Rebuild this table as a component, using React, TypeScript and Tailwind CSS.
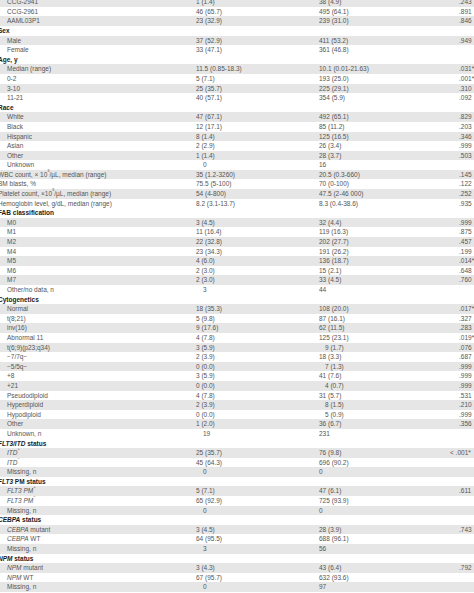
import React from 'react';

type Row = {
  l: React.ReactNode;
  t: 'h' | 's' | 'r';
  a?: string;
  b?: string;
  p?: string;
  g?: boolean;
};

const Sup = ({ c }: { c: string }) => <sup className="text-[4px] align-super leading-none">{c}</sup>;

const rows: Row[] = [
  { l: 'CCG-2941', t: 's', a: '1 (1.4)', b: '38 (4.9)', p: '.243', g: true },
  { l: 'CCG-2961', t: 's', a: '46 (65.7)', b: '495 (64.1)', p: '.891' },
  { l: 'AAML03P1', t: 's', a: '23 (32.9)', b: '239 (31.0)', p: '.846', g: true },
  { l: 'Sex', t: 'h' },
  { l: 'Male', t: 's', a: '37 (52.9)', b: '411 (53.2)', p: '.949', g: true },
  { l: 'Female', t: 's', a: '33 (47.1)', b: '361 (46.8)' },
  { l: 'Age, y', t: 'h' },
  { l: 'Median (range)', t: 's', a: '11.5 (0.85-18.3)', b: '10.1 (0.01-21.63)', p: '.031*', g: true },
  { l: '0-2', t: 's', a: '5 (7.1)', b: '193 (25.0)', p: '.001*' },
  { l: '3-10', t: 's', a: '25 (35.7)', b: '225 (29.1)', p: '.310', g: true },
  { l: '11-21', t: 's', a: '40 (57.1)', b: '354 (5.9)', p: '.092' },
  { l: 'Race', t: 'h' },
  { l: 'White', t: 's', a: '47 (67.1)', b: '492 (65.1)', p: '.829', g: true },
  { l: 'Black', t: 's', a: '12 (17.1)', b: '85 (11.2)', p: '.203' },
  { l: 'Hispanic', t: 's', a: '8 (1.4)', b: '125 (16.5)', p: '.346', g: true },
  { l: 'Asian', t: 's', a: '2 (2.9)', b: '26 (3.4)', p: '.999' },
  { l: 'Other', t: 's', a: '1 (1.4)', b: '28 (3.7)', p: '.503', g: true },
  { l: 'Unknown', t: 's', a: '0', b: '16' },
  {
    l: (
      <>
        WBC count, × 10<Sup c="3" />/µL, median (range)
      </>
    ),
    t: 'r',
    a: '35 (1.2-3260)',
    b: '20.5 (0.3-660)',
    p: '.145',
    g: true,
  },
  { l: 'BM blasts, %', t: 'r', a: '75.5 (5-100)', b: '70 (0-100)', p: '.122' },
  {
    l: (
      <>
        Platelet count, ×10<Sup c="3" />/µL, median (range)
      </>
    ),
    t: 'r',
    a: '54 (4-800)',
    b: '47.5 (2-46 000)',
    p: '.252',
    g: true,
  },
  { l: 'Hemoglobin level, g/dL, median (range)', t: 'r', a: '8.2 (3.1-13.7)', b: '8.3 (0.4-38.6)', p: '.935' },
  { l: 'FAB classification', t: 'h' },
  { l: 'M0', t: 's', a: '3 (4.5)', b: '32 (4.4)', p: '.999', g: true },
  { l: 'M1', t: 's', a: '11 (16.4)', b: '119 (16.3)', p: '.875' },
  { l: 'M2', t: 's', a: '22 (32.8)', b: '202 (27.7)', p: '.457', g: true },
  { l: 'M4', t: 's', a: '23 (34.3)', b: '191 (26.2)', p: '.199' },
  { l: 'M5', t: 's', a: '4 (6.0)', b: '136 (18.7)', p: '.014*', g: true },
  { l: 'M6', t: 's', a: '2 (3.0)', b: '15 (2.1)', p: '.648' },
  { l: 'M7', t: 's', a: '2 (3.0)', b: '33 (4.5)', p: '.760', g: true },
  { l: 'Other/no data, n', t: 's', a: '3', b: '44' },
  { l: 'Cytogenetics', t: 'h' },
  { l: 'Normal', t: 's', a: '18 (35.3)', b: '108 (20.0)', p: '.017*', g: true },
  { l: 't(8;21)', t: 's', a: '5 (9.8)', b: '87 (16.1)', p: '.327' },
  { l: 'inv(16)', t: 's', a: '9 (17.6)', b: '62 (11.5)', p: '.283', g: true },
  { l: 'Abnormal 11', t: 's', a: '4 (7.8)', b: '125 (23.1)', p: '.019*' },
  { l: 't(6;9)(p23;q34)', t: 's', a: '3 (5.9)', b: '9 (1.7)', p: '.076', g: true },
  { l: '\u22127/7q\u2212', t: 's', a: '2 (3.9)', b: '18 (3.3)', p: '.687' },
  { l: '\u22125/5q\u2212', t: 's', a: '0 (0.0)', b: '7 (1.3)', p: '.999', g: true },
  { l: '+8', t: 's', a: '3 (5.9)', b: '41 (7.6)', p: '.999' },
  { l: '+21', t: 's', a: '0 (0.0)', b: '4 (0.7)', p: '.999', g: true },
  { l: 'Pseudodiploid', t: 's', a: '4 (7.8)', b: '31 (5.7)', p: '.531' },
  { l: 'Hyperdiploid', t: 's', a: '2 (3.9)', b: '8 (1.5)', p: '.210', g: true },
  { l: 'Hypodiploid', t: 's', a: '0 (0.0)', b: '5 (0.9)', p: '.999' },
  { l: 'Other', t: 's', a: '1 (2.0)', b: '36 (6.7)', p: '.356', g: true },
  { l: 'Unknown, n', t: 's', a: '19', b: '231' },
  {
    l: (
      <>
        <i>FLT3/ITD</i> status
      </>
    ),
    t: 'h',
  },
  {
    l: (
      <i>
        ITD<Sup c="+" />
      </i>
    ),
    t: 's',
    a: '25 (35.7)',
    b: '76 (9.8)',
    p: '< .001*',
    g: true,
  },
  {
    l: (
      <i>
        ITD<Sup c={'\u2212'} />
      </i>
    ),
    t: 's',
    a: '45 (64.3)',
    b: '696 (90.2)',
  },
  { l: 'Missing, n', t: 's', a: '0', b: '0', g: true },
  {
    l: (
      <>
        <i>FLT3</i> PM status
      </>
    ),
    t: 'h',
  },
  {
    l: (
      <i>
        FLT3 PM<Sup c="+" />
      </i>
    ),
    t: 's',
    a: '5 (7.1)',
    b: '47 (6.1)',
    p: '.611',
    g: true,
  },
  {
    l: (
      <i>
        FLT3 PM<Sup c={'\u2212'} />
      </i>
    ),
    t: 's',
    a: '65 (92.9)',
    b: '725 (93.9)',
  },
  { l: 'Missing, n', t: 's', a: '0', b: '0', g: true },
  {
    l: (
      <>
        <i>CEBPA</i> status
      </>
    ),
    t: 'h',
  },
  {
    l: (
      <>
        <i>CEBPA</i> mutant
      </>
    ),
    t: 's',
    a: '3 (4.5)',
    b: '28 (3.9)',
    p: '.743',
    g: true,
  },
  {
    l: (
      <>
        <i>CEBPA</i> WT
      </>
    ),
    t: 's',
    a: '64 (95.5)',
    b: '688 (96.1)',
  },
  { l: 'Missing, n', t: 's', a: '3', b: '56', g: true },
  {
    l: (
      <>
        <i>NPM</i> status
      </>
    ),
    t: 'h',
  },
  {
    l: (
      <>
        <i>NPM</i> mutant
      </>
    ),
    t: 's',
    a: '3 (4.3)',
    b: '43 (6.4)',
    p: '.792',
    g: true,
  },
  {
    l: (
      <>
        <i>NPM</i> WT
      </>
    ),
    t: 's',
    a: '67 (95.7)',
    b: '632 (93.6)',
  },
  { l: 'Missing, n', t: 's', a: '0', b: '97', g: true },
];

// single numbers in col 2 sit a bit further right
const countOnly = (v?: string) => !!v && !v.includes('(');
const oneDigit = (v?: string) => !!v && /^\d \(/.test(v);

export default function App() {
  return (
    <div
      className="w-[474px] h-[593px] overflow-hidden bg-white text-[#555] text-[6.5px]"
      style={{ fontFamily: '"Liberation Sans", Arial, sans-serif' }}
    >
      <div className="mt-[-2.8px]">
        {rows.map((r, i) => (
          <div
            key={i}
            className={`grid grid-cols-[196px_123px_140px_15px] h-[9.6px] leading-[9.6px] whitespace-nowrap ${
              r.g ? 'bg-[#e6e6e6]' : 'bg-white'
            }`}
          >
            <div
              className={
                r.t === 'h'
                  ? 'ml-[-2px] font-bold text-[#1c1c1c]'
                  : r.t === 'r'
                  ? 'ml-[-2px]'
                  : 'pl-[7px]'
              }
            >
              {r.l}
            </div>
            <div className={countOnly(r.a) ? 'pl-[7px]' : ''}>{r.a}</div>
            <div className={oneDigit(r.b) ? 'pl-[6px]' : ''}>{r.b}</div>
            <div className={r.p?.startsWith('<') ? 'ml-[-9px]' : ''}>{r.p}</div>
          </div>
        ))}
      </div>
    </div>
  );
}
